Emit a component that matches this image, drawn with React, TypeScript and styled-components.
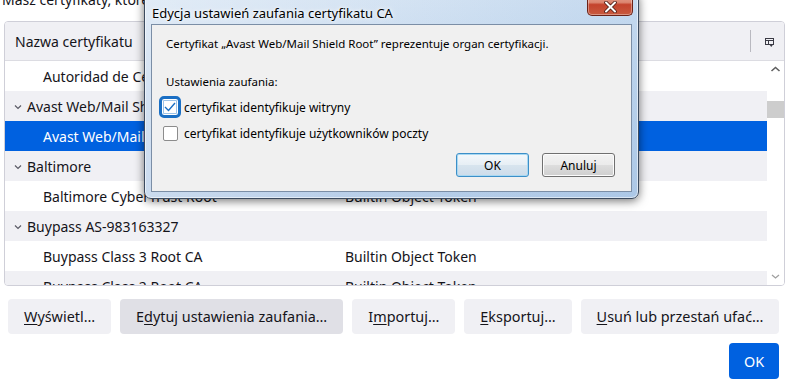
import styled, { createGlobalStyle } from "styled-components";

const GlobalStyle = createGlobalStyle`
  html, body {
    margin: 0;
    padding: 0;
    background: #ffffff;
    overflow: hidden;
  }
  body {
    font-family: "Noto Sans", "Open Sans", sans-serif;
    color: #15141a;
  }
`;

type Tone = "plain" | "alt" | "selected";

interface CertRow {
  name: string;
  token?: string;
  group?: boolean;
  tone: Tone;
}

const rows: CertRow[] = [
  { name: "Autoridad de Certificacion Firmaprofesional CIF A62634068", token: "Builtin Object Token", tone: "plain" },
  { name: "Avast Web/Mail Shield", group: true, tone: "alt" },
  { name: "Avast Web/Mail Shield Root", token: "Software Security Device", tone: "selected" },
  { name: "Baltimore", group: true, tone: "alt" },
  { name: "Baltimore CyberTrust Root", token: "Builtin Object Token", tone: "plain" },
  { name: "Buypass AS-983163327", group: true, tone: "alt" },
  { name: "Buypass Class 3 Root CA", token: "Builtin Object Token", tone: "plain" },
  { name: "Buypass Class 2 Root CA", token: "Builtin Object Token", tone: "alt" },
];

const Page = styled.div`
  position: relative;
  width: 789px;
  height: 380px;
  box-sizing: border-box;
  padding: 0 4px;
  overflow: hidden;
`;

const Intro = styled.p`
  margin: -10px 0 0 -2px;
  height: 20px;
  font-size: 14px;
  line-height: 20px;
  white-space: nowrap;
`;

const Tree = styled.div`
  margin-top: 11px;
  height: 265px;
  box-sizing: border-box;
  border: 1px solid #cfcfd8;
  border-radius: 4px;
  display: flex;
  flex-direction: column;
  overflow: hidden;
`;

const Header = styled.div`
  height: 38px;
  flex: none;
  display: flex;
  align-items: center;
  padding-left: 10px;
  background: #f0f0f4;
  border-bottom: 1px solid #dcdce2;
  font-size: 14px;
`;

const HeaderLabel = styled.span`
  flex: 1;
`;

const Splitter = styled.span`
  width: 1px;
  height: 22px;
  background: #b9b9c0;
  margin-right: 14px;
`;

const PickerIcon = styled.svg`
  width: 9px;
  height: 9px;
  margin-right: 10px;
  margin-top: 2px;
`;

const Body = styled.div`
  flex: 1;
  display: flex;
  min-height: 0;
`;

const Rows = styled.div`
  flex: 1;
  overflow: hidden;
`;

const Row = styled.div<{ $tone: Tone }>`
  height: 30px;
  display: grid;
  grid-template-columns: 340px 1fr;
  align-items: center;
  font-size: 14px;
  white-space: nowrap;
  background: ${({ $tone }) =>
    $tone === "selected" ? "#0061e0" : $tone === "alt" ? "#f0f0f4" : "#ffffff"};
  color: ${({ $tone }) => ($tone === "selected" ? "#ffffff" : "#15141a")};
`;

const NameCell = styled.span<{ $group?: boolean }>`
  display: flex;
  align-items: center;
  gap: 5px;
  padding-left: ${({ $group }) => ($group ? "9px" : "38px")};
  overflow: hidden;
`;

const TokenCell = styled.span`
  overflow: hidden;
`;

const Twisty = styled.svg`
  width: 8px;
  height: 6px;
  flex: none;
  margin-top: 2px;
`;

const Scrollbar = styled.div`
  width: 17px;
  flex: none;
  display: flex;
  flex-direction: column;
  background: #ffffff;
`;

const ScrollArrow = styled.svg`
  width: 17px;
  height: 17px;
  flex: none;
`;

const Track = styled.div`
  flex: 1;
`;

const Thumb = styled.div`
  height: 17px;
  background: #cdcdcd;
`;

const ButtonRow = styled.div`
  display: flex;
  gap: 9px;
  margin-top: 13px;
  padding-left: 4px;
`;

const Button = styled.button<{ $active?: boolean }>`
  height: 35px;
  padding: 0 16px;
  border: none;
  border-radius: 4px;
  background: ${({ $active }) => ($active ? "#e0e0e6" : "#f0f0f4")};
  font-family: inherit;
  font-size: 14.4px;
  color: #15141a;
  white-space: nowrap;

  u {
    text-decoration-thickness: 1px;
    text-underline-offset: 2px;
  }
`;

const OkRow = styled.div`
  display: flex;
  justify-content: flex-end;
  margin-top: 9px;
  padding-right: 6px;
`;

const PrimaryButton = styled.button`
  width: 50px;
  height: 36px;
  border: none;
  border-radius: 4px;
  background: #0061e0;
  color: #ffffff;
  font-family: inherit;
  font-size: 14.4px;
`;

/* ---------- Windows 7 style dialog ---------- */

const Dialog = styled.div`
  position: absolute;
  left: 144px;
  top: -8px;
  width: 495px;
  height: 207px;
  box-sizing: border-box;
  display: flex;
  flex-direction: column;
  border: 1px solid #3b4a5e;
  border-radius: 7px;
  background:
    linear-gradient(90deg, rgba(255, 255, 255, 0.25), rgba(255, 255, 255, 0) 40%, rgba(120, 170, 220, 0.2) 100%),
    linear-gradient(180deg, #d9e6f4 0%, #c9dbef 40%, #b9cfe9 100%);
  box-shadow: 0 2px 10px rgba(0, 0, 0, 0.55), inset 0 0 0 1px rgba(255, 255, 255, 0.55);
  font-family: "Noto Sans", "Open Sans", sans-serif;
  font-size: 11.5px;
  color: #000000;
`;

const TitleBar = styled.div`
  height: 23px;
  padding-top: 8px;
  padding-left: 7px;
  display: flex;
  align-items: center;
  flex: none;
`;

const Title = styled.span`
  flex: 1;
  font-size: 13px;
  text-shadow: 0 0 6px #ffffff, 0 0 3px #ffffff;
`;

const CloseButton = styled.div`
  align-self: flex-start;
  margin-top: -9px;
  margin-right: 5px;
  width: 46px;
  height: 24px;
  box-sizing: border-box;
  border: 1px solid #6b2217;
  border-top: none;
  border-radius: 0 0 5px 5px;
  background: linear-gradient(180deg, #e9a99a 0%, #dc8772 45%, #c4432d 55%, #c85a3f 100%);
  box-shadow: inset 0 0 0 1px rgba(255, 255, 255, 0.35);
  display: flex;
  align-items: flex-end;
  justify-content: center;
  padding-bottom: 2px;
`;

const CloseGlyph = styled.svg`
  width: 15px;
  height: 12px;
`;

const Client = styled.div`
  flex: 1;
  margin: 0 6px 6px 6px;
  border: 1px solid #7b8ea6;
  background: #f0f0f0;
  padding: 11px 16px 14px 14px;
  display: flex;
  flex-direction: column;
`;

const Line = styled.div`
  height: 16px;
  line-height: 16px;
  white-space: nowrap;
`;

const SettingsLabel = styled(Line)`
  margin-top: 22px;
`;

const CheckRow = styled.label<{ $first?: boolean }>`
  display: flex;
  align-items: center;
  height: 22px;
  margin-top: ${({ $first }) => ($first ? "6px" : "4px")};
  margin-left: -7px;
  gap: 3px;
  font-size: 12px;
  white-space: nowrap;
`;

const BoxSlot = styled.span`
  width: 22px;
  height: 22px;
  display: flex;
  align-items: center;
  justify-content: center;
`;

const Box = styled.span<{ $checked?: boolean }>`
  box-sizing: border-box;
  display: flex;
  align-items: center;
  justify-content: center;
  background: #ffffff;
  ${({ $checked }) =>
    $checked
      ? `
    width: 22px;
    height: 22px;
    border: 3px solid #1a6fc4;
    border-radius: 5px;
    box-shadow: inset 0 0 0 1px #ffffff, inset 0 0 0 2px #9cc3e8;
  `
      : `
    width: 15px;
    height: 15px;
    border: 1px solid #8c8c8c;
    border-radius: 2px;
  `}
`;

const DialogButtons = styled.div`
  margin-top: auto;
  display: flex;
  justify-content: flex-end;
  gap: 13px;
`;

const WinButton = styled.button<{ $default?: boolean }>`
  width: 73px;
  height: 24px;
  border: 1px solid ${({ $default }) => ($default ? "#3c8fc8" : "#707070")};
  border-radius: 3px;
  background: ${({ $default }) =>
    $default
      ? "linear-gradient(180deg, #f4f8fb 0%, #e7eff5 48%, #d7e4ee 52%, #cddcea 100%)"
      : "linear-gradient(180deg, #f3f3f3 0%, #ebebeb 48%, #dddddd 52%, #cfcfcf 100%)"};
  box-shadow: inset 0 0 0 1px ${({ $default }) => ($default ? "#a8d8f2" : "#fcfcfc")};
  font-family: inherit;
  font-size: 12px;
  color: #000000;
  padding: 0;
`;

function Chevron() {
  return (
    <Twisty viewBox="0 0 8 6">
      <path d="M1 1.5 L4 4.5 L7 1.5" fill="none" stroke="#5b5b66" strokeWidth="1.2" />
    </Twisty>
  );
}

export default function App() {
  return (
    <>
      <GlobalStyle />
      <Page>
        <Intro>Masz certyfikaty, które identyfikują te organy certyfikacji:</Intro>
        <Tree>
          <Header>
            <HeaderLabel>Nazwa certyfikatu</HeaderLabel>
            <Splitter />
            <PickerIcon viewBox="0 0 9 9">
              <rect x="0.5" y="0.5" width="8" height="6" fill="none" stroke="#3a3a44" />
              <path d="M0.5 2.5 H8.5 M3.5 2.5 V6.5" stroke="#3a3a44" />
              <path d="M4 6 L8.5 6 L6.25 9 Z" fill="#3a3a44" />
            </PickerIcon>
          </Header>
          <Body>
            <Rows>
              {rows.map((row) => (
                <Row key={row.name} $tone={row.tone}>
                  <NameCell $group={row.group}>
                    {row.group && <Chevron />}
                    {row.name}
                  </NameCell>
                  <TokenCell>{row.token}</TokenCell>
                </Row>
              ))}
            </Rows>
            <Scrollbar>
              <ScrollArrow viewBox="0 0 17 17">
                <path d="M4.5 10 L8.5 6.5 L12.5 10" fill="none" stroke="#606060" strokeWidth="1.6" />
              </ScrollArrow>
              <Track>
                <Thumb style={{ marginTop: 23 }} />
              </Track>
              <ScrollArrow viewBox="0 0 17 17">
                <path d="M5 7 L8.5 10 L12 7" fill="none" stroke="#a0a0a0" strokeWidth="1.3" />
              </ScrollArrow>
            </Scrollbar>
          </Body>
        </Tree>
        <ButtonRow>
          <Button>
            <u>W</u>yświetl…
          </Button>
          <Button $active>
            E<u>d</u>ytuj ustawienia zaufania…
          </Button>
          <Button>
            I<u>m</u>portuj…
          </Button>
          <Button>
            <u>E</u>ksportuj…
          </Button>
          <Button>
            <u>U</u>suń lub przestań ufać…
          </Button>
        </ButtonRow>
        <OkRow>
          <PrimaryButton>OK</PrimaryButton>
        </OkRow>

        <Dialog>
          <TitleBar>
            <Title>Edycja ustawień zaufania certyfikatu CA</Title>
            <CloseButton>
              <CloseGlyph viewBox="0 0 15 12">
                <path d="M3 1.5 L12 10.5 M12 1.5 L3 10.5" stroke="#4a1a14" strokeWidth="3.6" strokeLinecap="round" />
                <path d="M3 1.5 L12 10.5 M12 1.5 L3 10.5" stroke="#ffffff" strokeWidth="2" strokeLinecap="round" />
              </CloseGlyph>
            </CloseButton>
          </TitleBar>
          <Client>
            <Line>Certyfikat „Avast Web/Mail Shield Root” reprezentuje organ certyfikacji.</Line>
            <SettingsLabel>Ustawienia zaufania:</SettingsLabel>
            <CheckRow $first>
              <BoxSlot>
                <Box $checked>
                  <svg width="12" height="10" viewBox="0 0 12 10">
                    <path d="M1 5 L4.5 8.5 L11 1" fill="none" stroke="#1a6fc4" strokeWidth="1.4" />
                  </svg>
                </Box>
              </BoxSlot>
              certyfikat identyfikuje witryny
            </CheckRow>
            <CheckRow>
              <BoxSlot>
                <Box />
              </BoxSlot>
              certyfikat identyfikuje użytkowników poczty
            </CheckRow>
            <DialogButtons>
              <WinButton $default>OK</WinButton>
              <WinButton>Anuluj</WinButton>
            </DialogButtons>
          </Client>
        </Dialog>
      </Page>
    </>
  );
}
